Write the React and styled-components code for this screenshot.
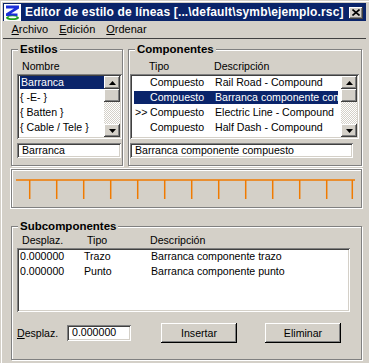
import React from 'react';
import styled, { createGlobalStyle } from 'styled-components';

const Global = createGlobalStyle`
  html, body { margin: 0; padding: 0; background: #d4d0c8; }
  body { font-family: "Liberation Sans", Arial, sans-serif; font-size: 10.6px; color: #000; }
  * { box-sizing: border-box; }
`;

const raised = `
  background: #d4d0c8;
  box-shadow: inset -1px -1px #404040, inset 1px 1px #fff, inset -2px -2px #808080, inset 2px 2px #d4d0c8;
`;

const sunken = `
  background: #fff;
  box-shadow: inset 1px 1px #808080, inset -1px -1px #fff, inset 2px 2px #404040, inset -2px -2px #d4d0c8;
`;

const Win = styled.div`
  width: 369px;
  height: 363px;
  padding: 3px;
  background: #d4d0c8;
  box-shadow: inset 1px 1px #d4d0c8, inset 2px 2px #fff;
  display: flex;
  flex-direction: column;
  overflow: hidden;
`;

const TitleBar = styled.div`
  height: 18px;
  background: #0a246a;
  display: flex;
  align-items: center;
  padding: 0 3px 0 1px;
`;

const TitleText = styled.div`
  color: #fff;
  font-weight: bold;
  font-size: 12px;
  margin-left: 4px;
  flex: 1;
  white-space: nowrap;
  letter-spacing: 0.15px;
`;

const CloseBtn = styled.div`
  width: 14px;
  height: 12px;
  ${raised}
  display: flex;
  align-items: center;
  justify-content: center;
  margin-top: 1px;
`;

const MenuBar = styled.div`
  height: 18px;
  display: flex;
  align-items: center;
  padding-left: 3px;
  border-bottom: 1px solid #404040;
  font-size: 11px;
`;

const MenuItem = styled.div`
  padding: 0 5.5px;
  line-height: 13px;
  u { text-decoration: underline; text-underline-offset: 1px; }
`;

const Content = styled.div`
  flex: 1;
  display: flex;
  flex-direction: column;
  padding: 0 4px 0 8px;
`;

const TopRow = styled.div`
  display: flex;
  gap: 5px;
  margin-top: 10px;
`;

const Group = styled.div`
  position: relative;
  width: ${p => p.$w ? p.$w + 'px' : 'auto'};
  flex: ${p => p.$w ? 'none' : '1'};
  height: ${p => p.$h}px;
  margin-top: ${p => p.$mt || 0}px;
  border: 1px solid #808080;
  box-shadow: inset 1px 1px #fff, 1px 1px #fff;
  padding: ${p => p.$pad};
  display: flex;
  flex-direction: column;
`;

const GroupLabel = styled.div`
  position: absolute;
  top: -8px;
  left: 6px;
  padding: 0 2px;
  background: #d4d0c8;
  font-weight: bold;
  font-size: 11.5px;
  line-height: 14px;
`;

const Header = styled.div`
  height: 14px;
  line-height: 13px;
  display: grid;
  grid-template-columns: ${p => p.$cols};
  padding-left: ${p => p.$pl}px;
  white-space: nowrap;
`;

const ListBox = styled.div`
  ${sunken}
  height: ${p => p.$h}px;
  width: ${p => p.$w ? p.$w + 'px' : 'auto'};
  padding: 2px;
  display: flex;
`;

const Rows = styled.div`
  flex: 1;
  overflow: hidden;
  display: flex;
  flex-direction: column;
`;

const Row = styled.div`
  height: ${p => p.$rh || 15}px;
  line-height: 13px;
  display: grid;
  grid-template-columns: ${p => p.$cols || '1fr'};
  padding-left: ${p => p.$pl || 1}px;
  white-space: nowrap;
  overflow: hidden;
  span { display: block; }
`;

const Hl = styled.div`
  height: 13px;
  display: grid;
  grid-template-columns: ${p => p.$cols || '1fr'};
  padding-left: ${p => p.$pl || 1}px;
  margin-left: ${p => p.$ml || 0}px;
  background: ${p => (p.$sel ? '#0a246a' : 'transparent')};
  color: ${p => (p.$sel ? '#fff' : '#000')};
  white-space: nowrap;
  overflow: hidden;
`;

const ScrollBar = styled.div`
  width: 16px;
  display: flex;
  flex-direction: column;
  background: #d4d0c8;
  margin-left: ${p => p.$ml || 0}px;
`;

const SBtn = styled.div`
  height: ${p => p.$h || 13}px;
  ${raised}
  display: flex;
  align-items: center;
  justify-content: center;
`;

const Track = styled.div`
  flex: 1;
  background: #d4d0c8;
  background-image: repeating-conic-gradient(#fff 0 25%, #d4d0c8 0 50%);
  background-size: 2px 2px;
`;

const Field = styled.div`
  ${sunken}
  height: ${p => p.$h || 15}px;
  width: ${p => p.$w ? p.$w + 'px' : 'auto'};
  margin-top: ${p => p.$mt || 0}px;
  padding: 0 4px 0 5px;
  line-height: ${p => (p.$h || 15) - 1}px;
  white-space: nowrap;
  overflow: hidden;
`;

const Preview = styled.div`
  margin-top: 3px;
  height: 39px;
  border: 1px solid #808080;
  box-shadow: 0 0 0 1px #fff, inset 1px 1px #fff;
  display: flex;
`;

const BottomRow = styled.div`
  display: flex;
  align-items: center;
  margin-top: 11px;
`;

const Label = styled.div`
  width: 50px;
  u { text-decoration: underline; text-underline-offset: 1px; }
`;

const Button = styled.div`
  width: 76px;
  height: 20px;
  background: #d4d0c8;
  box-shadow: inset -1px -1px #000, inset 1px 1px #fff, inset -2px -2px #808080, inset 2px 2px #d4d0c8;
  display: flex;
  align-items: center;
  justify-content: center;
  margin-left: ${p => p.$ml}px;
`;

const Up = () => (
  <svg width="7" height="4" viewBox="0 0 7 4"><path d="M3.5 0L7 4H0Z" fill="#000" /></svg>
);
const Down = () => (
  <svg width="7" height="4" viewBox="0 0 7 4"><path d="M0 0H7L3.5 4Z" fill="#000" /></svg>
);

const VScroll = ({ ml }) => (
  <ScrollBar $ml={ml}>
    <SBtn><Up /></SBtn>
    <SBtn $h={13} />
    <Track />
    <SBtn><Down /></SBtn>
  </ScrollBar>
);

const Logo = () => (
  <svg width="17" height="17" viewBox="0 0 17 17">
    <rect x="0" y="0" width="17" height="17" fill="#fff" />
    <path d="M2 1.5H15V4.5L7 9.5H13.5V12H2V9.5L10 4.5H2Z" fill="#1b2fd8" />
    <ellipse cx="8.5" cy="13.8" rx="6.5" ry="2.3" fill="#1fa11f" />
    <ellipse cx="8.5" cy="13.3" rx="4" ry="1" fill="#fff" />
  </svg>
);

const ticks = [29.7, 56.7, 83.7, 110.7, 137.7, 164.7, 191.7, 218.7, 245.7, 272.7, 299.7, 326.7, 352.3];

const LineDrawing = () => (
  <svg width="349" height="37" viewBox="0 0 349 37">
    <line x1="4" y1="10" x2="343" y2="10" stroke="#f07a00" strokeWidth="1.5" />
    {ticks.map((t, i) => (
      <line key={i} x1={t - 12} y1="10" x2={t - 12} y2="29" stroke="#f07a00" strokeWidth="1.5" />
    ))}
  </svg>
);

const compRows = [
  { m: '', t: 'Compuesto', d: 'Rail Road - Compound', sel: false },
  { m: '', t: 'Compuesto', d: 'Barranca componente compuesto', sel: true },
  { m: '>>', t: 'Compuesto', d: 'Electric Line - Compound', sel: false },
  { m: '', t: 'Compuesto', d: 'Half Dash - Compound', sel: false },
];

export default function App() {
  return (
    <>
      <Global />
      <Win>
        <TitleBar>
          <Logo />
          <TitleText>Editor de estilo de líneas [...\default\symb\ejemplo.rsc]</TitleText>
          <CloseBtn>
            <svg width="8" height="7" viewBox="0 0 8 7">
              <path d="M0.5 0.5L7.5 6.5M7.5 0.5L0.5 6.5" stroke="#000" strokeWidth="1.6" />
            </svg>
          </CloseBtn>
        </TitleBar>
        <MenuBar>
          <MenuItem><u>A</u>rchivo</MenuItem>
          <MenuItem><u>E</u>dición</MenuItem>
          <MenuItem><u>O</u>rdenar</MenuItem>
        </MenuBar>
        <Content>
          <TopRow>
            <Group $w={112} $h={117} $pad="10px 0 0 5px">
              <GroupLabel>Estilos</GroupLabel>
              <Header $cols="1fr" $pl={5}>Nombre</Header>
              <ListBox $h={65} $w={105}>
                <Rows>
                  <Row><Hl $sel>Barranca</Hl></Row>
                  <Row>{'{ -E- }'}</Row>
                  <Row>{'{ Batten }'}</Row>
                  <Row>{'{ Cable / Tele }'}</Row>
                </Rows>
                <VScroll />
              </ListBox>
              <Field $w={104} $mt={4}>Barranca</Field>
            </Group>
            <Group $h={117} $pad="10px 2px 0 1px">
              <GroupLabel>Componentes</GroupLabel>
              <Header $cols="65px 1fr" $pl={19}><span>Tipo</span><span>Descripción</span></Header>
              <ListBox $h={65}>
                <Rows>
                  {compRows.map((r, i) => (
                    <Row key={i} $pl={0}>
                      <Hl $sel={r.sel} $cols="15px 65px 1fr" $pl={0} $ml={1}>
                        <span>{r.m}</span><span>{r.t}</span><span>{r.d}</span>
                      </Hl>
                    </Row>
                  ))}
                </Rows>
                <VScroll ml={3} />
              </ListBox>
              <Field $w={223} $mt={4}>Barranca componente compuesto</Field>
            </Group>
          </TopRow>
          <Preview><LineDrawing /></Preview>
          <Group $h={128} $mt={18} $pad="7px 11px 0 5px">
            <GroupLabel>Subcomponentes</GroupLabel>
            <Header $cols="65px 63px 1fr" $pl={5}><span>Desplaz.</span><span>Tipo</span><span>Descripción</span></Header>
            <ListBox $h={64}>
              <Rows>
                <Row $cols="64px 67px 1fr" $pl={0} $rh={15}><span>0.000000</span><span>Trazo</span><span>Barranca componente trazo</span></Row>
                <Row $cols="64px 67px 1fr" $pl={0} $rh={15}><span>0.000000</span><span>Punto</span><span>Barranca componente punto</span></Row>
              </Rows>
            </ListBox>
            <BottomRow>
              <Label><u>D</u>esplaz.</Label>
              <Field $w={64} $h={16}>0.000000</Field>
              <Button $ml={30}>Insertar</Button>
              <Button $ml={28}>Eliminar</Button>
            </BottomRow>
          </Group>
        </Content>
      </Win>
    </>
  );
}
